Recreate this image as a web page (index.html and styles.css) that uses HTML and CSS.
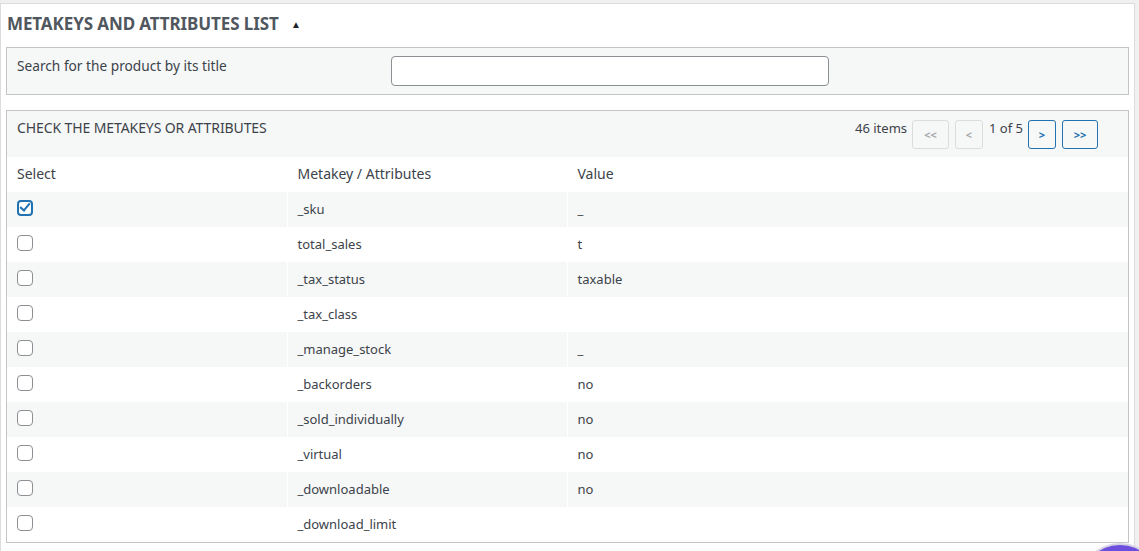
FILE: index.html
```html
<!DOCTYPE html>
<html lang="en">

<head>
    <meta charset="UTF-8">
    <meta name="viewport" content="width=device-width, initial-scale=1.0">
    <title>Metakeys and attributes list</title>
    <link rel="stylesheet" href="styles.css">
</head>

<body>
    <div class="wrap">
        <h2 class="section-title">Metakeys and attributes list <span class="toggle">&#9650;</span></h2>

        <div class="search-box">
            <label for="productSearch">Search for the product by its title</label>
            <input type="text" id="productSearch" name="productSearch">
        </div>

        <div class="list-box">
            <div class="list-head">
                <span class="list-title">Check the metakeys or attributes</span>
                <div class="pager">
                    <span class="pager-text">46 items</span>
                    <button type="button" class="pager-btn" disabled>&lt;&lt;</button>
                    <button type="button" class="pager-btn" disabled>&lt;</button>
                    <span class="pager-text">1 of 5</span>
                    <button type="button" class="pager-btn active">&gt;</button>
                    <button type="button" class="pager-btn active wide">&gt;&gt;</button>
                </div>
            </div>
            <table class="meta-table">
                <thead>
                    <tr>
                        <th>Select</th>
                        <th>Metakey / Attributes</th>
                        <th>Value</th>
                    </tr>
                </thead>
                <tbody>
                    <tr>
                        <td><input type="checkbox" class="check" checked></td>
                        <td>_sku</td>
                        <td>_</td>
                    </tr>
                    <tr>
                        <td><input type="checkbox" class="check"></td>
                        <td>total_sales</td>
                        <td>t</td>
                    </tr>
                    <tr>
                        <td><input type="checkbox" class="check"></td>
                        <td>_tax_status</td>
                        <td>taxable</td>
                    </tr>
                    <tr>
                        <td><input type="checkbox" class="check"></td>
                        <td>_tax_class</td>
                        <td></td>
                    </tr>
                    <tr>
                        <td><input type="checkbox" class="check"></td>
                        <td>_manage_stock</td>
                        <td>_</td>
                    </tr>
                    <tr>
                        <td><input type="checkbox" class="check"></td>
                        <td>_backorders</td>
                        <td>no</td>
                    </tr>
                    <tr>
                        <td><input type="checkbox" class="check"></td>
                        <td>_sold_individually</td>
                        <td>no</td>
                    </tr>
                    <tr>
                        <td><input type="checkbox" class="check"></td>
                        <td>_virtual</td>
                        <td>no</td>
                    </tr>
                    <tr>
                        <td><input type="checkbox" class="check"></td>
                        <td>_downloadable</td>
                        <td>no</td>
                    </tr>
                    <tr>
                        <td><input type="checkbox" class="check"></td>
                        <td>_download_limit</td>
                        <td></td>
                    </tr>
                </tbody>
            </table>
        </div>
    </div>

    <div class="chat-bubble"></div>
</body>

</html>
```

FILE: styles.css
```css
body {
    font-family: "Noto Sans", "Open Sans", sans-serif;
    font-size: 13px;
    color: #3c434a;
    background-color: #f0f0f1;
    margin: 0;
    padding: 0;
    overflow: hidden;
}

.wrap {
    margin: 3px 4px 0 0;
    min-height: 560px;
    padding: 0 5px;
    background-color: #fff;
    border: 1px solid #dcdcde;
}

.section-title {
    margin: 0;
    padding: 8px 1px 0;
    height: 34px;
    box-sizing: border-box;
    font-size: 17px;
    font-weight: bold;
    text-transform: uppercase;
    color: #50575e;
    letter-spacing: -0.1px;
}

.toggle {
    font-size: 10px;
    margin-left: 8px;
    color: #1d2327;
    vertical-align: 2px;
}

/* search row */
.search-box {
    display: flex;
    align-items: flex-start;
    margin-top: 9px;
    height: 48px;
    box-sizing: border-box;
    padding: 8px 10px;
    background-color: #f6f7f7;
    border: 1px solid #c3c4c7;
}

.search-box label {
    width: 374px;
    padding-top: 0;
    font-size: 13.7px;
}

.search-box input {
    width: 438px;
    height: 30px;
    box-sizing: border-box;
    border: 1px solid #8c8f94;
    border-radius: 4px;
    background-color: #fff;
    margin-top: 0;
    padding: 0 8px;
}

/* list */
.list-box {
    margin-top: 15px;
    border: 1px solid #c3c4c7;
    background-color: #fff;
}

.list-head {
    display: flex;
    justify-content: space-between;
    align-items: flex-start;
    height: 46px;
    box-sizing: border-box;
    padding: 7px 30px 0 10px;
    background-color: #f6f7f7;
}

.list-title {
    text-transform: uppercase;
    font-size: 14px;
    letter-spacing: -0.1px;
}

.pager {
    display: flex;
    align-items: flex-start;
    gap: 6px;
    padding-top: 1px;
}

.pager-text + .pager-btn {
    margin-left: -1px;
}

.pager-btn {
    margin-top: 1px;
    width: 28px;
    height: 29px;
    padding: 0;
    font-family: inherit;
    font-size: 11px;
    font-weight: bold;
    background-color: #f6f7f7;
    border: 1px solid #dcdcde;
    border-radius: 3px;
    color: #a7aaad;
}

.pager-btn:first-of-type {
    width: 37px;
}

.pager-btn.active {
    border-color: #2271b1;
    color: #2271b1;
}

.pager-btn.wide {
    width: 36px;
}

.meta-table {
    width: 100%;
    border-collapse: collapse;
}

.meta-table th,
.meta-table td {
    width: 280px;
    height: 35px;
    padding: 0 10px 2px;
    text-align: left;
    box-sizing: border-box;
    border-right: 1px solid #fff;
}

.meta-table th:last-child,
.meta-table td:last-child {
    width: auto;
    border-right: none;
}

.meta-table th {
    font-weight: normal;
    font-size: 14px;
}

.meta-table tbody tr:nth-child(odd) td {
    background-color: #f6f7f7;
}

.meta-table td:first-child {
    vertical-align: top;
    padding-top: 8px;
}

.check {
    appearance: none;
    -webkit-appearance: none;
    position: relative;
    width: 16px;
    height: 16px;
    margin: 0;
    border: 1px solid #8c8f94;
    border-radius: 4px;
    background-color: #fff;
}

.check:checked {
    border: 2px solid #2271b1;
}

.check:checked::before {
    content: "";
    position: absolute;
    left: 3px;
    top: -1px;
    width: 4px;
    height: 8px;
    border: solid #2271b1;
    border-width: 0 2.5px 2.5px 0;
    transform: rotate(40deg);
}

.chat-bubble {
    position: fixed;
    left: 1080px;
    top: 545px;
    width: 80px;
    height: 80px;
    border-radius: 50%;
    background-color: #6c4fdc;
    box-shadow: 0 0 0 2px #d5d3e6;
}
```
